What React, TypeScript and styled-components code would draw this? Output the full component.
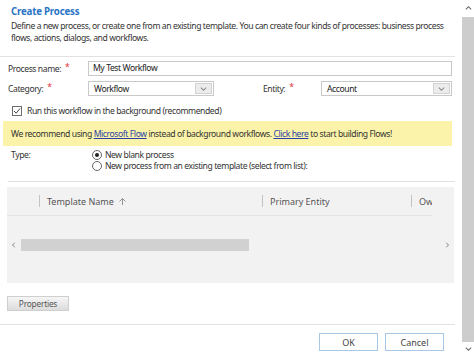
import React from 'react';
import styled, { createGlobalStyle } from 'styled-components';

const Global = createGlobalStyle`
  html, body { margin: 0; padding: 0; background: #fff; }
  body { font-family: "Noto Sans", "Open Sans", sans-serif; color: #333; letter-spacing: -0.42px; }
  * { box-sizing: border-box; }
`;

const Frame = styled.div`
  width: 474px;
  height: 354px;
  display: flex;
  overflow: hidden;
  background: #fff;
`;

const Main = styled.div`
  flex: 1;
  min-width: 0;
  display: flex;
  flex-direction: column;
`;

const VScroll = styled.div`
  width: 12px;
  display: flex;
  flex-direction: column;
`;

const ScrollArrow = styled.div<{ $h: number }>`
  height: ${p => p.$h}px;
  display: flex;
  align-items: center;
  justify-content: center;
  color: #666;
`;

const VThumb = styled.div`
  flex: 1;
  background: #cdcdcd;
`;

const Header = styled.div`
  height: 56px;
  padding: 4px 8px 0 11px;
`;

const Title = styled.div`
  font-size: 9.7px;
  font-weight: 700;
  line-height: 16px;
  letter-spacing: -0.2px;
  color: #2a74c5;
`;

const Desc = styled.div`
  font-size: 8.6px;
  line-height: 12px;
  color: #333;
`;

const Divider = styled.div<{ $l?: number; $r?: number; $t?: number }>`
  height: 1px;
  background: #e2e2e2;
  margin: ${p => p.$t ?? 0}px ${p => p.$r ?? 7}px 0 ${p => p.$l ?? 0}px;
`;

const Row = styled.div<{ $t: number; $h: number }>`
  display: flex;
  align-items: center;
  height: ${p => p.$h}px;
  margin-top: ${p => p.$t}px;
  padding: 0 10px 0 8px;
`;

const Label = styled.div<{ $w: number }>`
  width: ${p => p.$w}px;
  flex: none;
  font-size: 8.6px;
  color: #333;
  white-space: nowrap;
`;

const Star = styled.span`
  color: #e0303a;
  margin-left: 4px;
  position: relative;
  top: -2px;
`;

const TextInput = styled.div`
  flex: 1;
  height: 15px;
  border: 1px solid #c9c9c9;
  font-size: 8.6px;
  line-height: 13px;
  padding-left: 4px;
  color: #222;
`;

const Select = styled.div<{ $w: number }>`
  width: ${p => p.$w}px;
  flex: none;
  height: 15px;
  border: 1px solid #c9c9c9;
  display: flex;
  align-items: center;
  justify-content: space-between;
  padding: 1px;
  font-size: 8.6px;
  color: #222;
`;

const SelectText = styled.span`
  padding-left: 4px;
`;

const SelectBtn = styled.div`
  width: 17px;
  height: 11px;
  background: #ececec;
  border: 1px solid #d2d2d2;
  display: flex;
  align-items: center;
  justify-content: center;
`;

const Gap = styled.div<{ $w: number }>`
  width: ${p => p.$w}px;
  flex: none;
`;

const CheckRow = styled.div`
  display: flex;
  align-items: center;
  height: 11px;
  margin-top: 9px;
  padding-left: 12px;
  font-size: 8.6px;
  color: #333;
  gap: 5px;
`;

const CheckBox = styled.div`
  width: 10px;
  height: 10px;
  border: 1px solid #6d6d6d;
  display: flex;
  align-items: center;
  justify-content: center;
  background: #fff;
`;

const Banner = styled.div`
  margin: 5px 10px 0 3px;
  height: 25px;
  background: #fbf3a9;
  display: flex;
  align-items: center;
  padding-left: 8px;
  font-size: 8.6px;
  color: #333;
  white-space: nowrap;
`;

const Link = styled.a`
  color: #2b3fa8;
  text-decoration: underline;
`;

const TypeBlock = styled.div`
  display: flex;
  margin-top: 3px;
  padding-left: 11px;
`;

const TypeLabel = styled.div`
  width: 81px;
  flex: none;
  height: 11px;
  display: flex;
  align-items: center;
  font-size: 8.6px;
  color: #333;
`;

const RadioList = styled.div`
  display: flex;
  flex-direction: column;
`;

const RadioRow = styled.div`
  height: 11px;
  display: flex;
  align-items: center;
  gap: 3px;
  font-size: 8.6px;
  color: #333;
  white-space: nowrap;
`;

const Radio = styled.div<{ $on?: boolean }>`
  width: 10px;
  height: 10px;
  border-radius: 50%;
  border: 1px solid #666;
  display: flex;
  align-items: center;
  justify-content: center;
  &::after {
    content: '';
    width: 4px;
    height: 4px;
    border-radius: 50%;
    background: #222;
    display: ${p => (p.$on ? 'block' : 'none')};
  }
`;

const Grid = styled.div`
  margin: 5px 8px 0 7px;
  height: 96px;
  background: #f3f2f3;
  display: flex;
  flex-direction: column;
`;

const GridHeader = styled.div`
  height: 29px;
  border-bottom: 1px solid #e6e5e6;
  display: flex;
  align-items: center;
  width: 425px;
  overflow: hidden;
  flex: none;
`;

const Col = styled.div<{ $w: number }>`
  width: ${p => p.$w}px;
  flex: none;
  display: flex;
  align-items: center;
  height: 12px;
  font-size: 9px;
  letter-spacing: 0;
  color: #555;
  white-space: nowrap;
`;

const ColSep = styled.div`
  width: 1px;
  height: 12px;
  background: #c3c3c3;
  margin-right: 7px;
  flex: none;
`;

const HScroll = styled.div`
  margin-top: 23px;
  height: 12px;
  display: flex;
  align-items: center;
`;

const HArrow = styled.div`
  width: 14px;
  flex: none;
  display: flex;
  align-items: center;
  justify-content: center;
  color: #777;
`;

const HTrack = styled.div`
  flex: 1;
  height: 12px;
  display: flex;
`;

const HThumb = styled.div`
  width: 228px;
  background: #d2d1d2;
`;

const PropButton = styled.div`
  margin: 13px 0 0 7px;
  width: 62px;
  height: 15px;
  border: 1px solid #cfcfcf;
  background: linear-gradient(#f6f6f6, #dcdcdc);
  display: flex;
  align-items: center;
  justify-content: center;
  font-size: 8.3px;
  letter-spacing: -0.2px;
  color: #555;
`;

const Footer = styled.div`
  display: flex;
  justify-content: flex-end;
  gap: 7px;
  margin-top: 8px;
  padding-right: 18px;
`;

const DlgButton = styled.div`
  width: 59px;
  height: 18px;
  border: 1px solid #a9c8e6;
  background: #fff;
  display: flex;
  align-items: center;
  justify-content: center;
  font-size: 9px;
  letter-spacing: 0;
  color: #444;
`;

const Chevron = ({ dir, size = 7, color = '#777' }: { dir: 'up' | 'down' | 'left' | 'right'; size?: number; color?: string }) => {
  const d = {
    up: 'M1 5 L4 2 L7 5',
    down: 'M1 3 L4 6 L7 3',
    left: 'M5 1 L2 4 L5 7',
    right: 'M3 1 L6 4 L3 7',
  }[dir];
  return (
    <svg width={size} height={size} viewBox="0 0 8 8">
      <path d={d} fill="none" stroke={color} strokeWidth="1.2" />
    </svg>
  );
};

export default function App() {
  return (
    <>
      <Global />
      <Frame>
        <Main>
          <Header>
            <Title>Create Process</Title>
            <Desc>
              Define a new process, or create one from an existing template. You can create four kinds of processes: business process flows, actions, dialogs, and workflows.
            </Desc>
          </Header>
          <Divider />
          <Row $t={4} $h={15}>
            <Label $w={80}>Process name:<Star>*</Star></Label>
            <TextInput>My Test Workflow</TextInput>
          </Row>
          <Row $t={5} $h={15}>
            <Label $w={80}>Category:<Star>*</Star></Label>
            <Select $w={126}>
              <SelectText>Workflow</SelectText>
              <SelectBtn><Chevron dir="down" size={7} color="#888" /></SelectBtn>
            </Select>
            <Gap $w={49} />
            <Label $w={58}>Entity:<Star>*</Star></Label>
            <Select $w={131}>
              <SelectText>Account</SelectText>
              <SelectBtn><Chevron dir="down" size={7} color="#888" /></SelectBtn>
            </Select>
          </Row>
          <CheckRow>
            <CheckBox>
              <svg width="8" height="8" viewBox="0 0 8 8">
                <path d="M1 4 L3.2 6.2 L7 1.5" fill="none" stroke="#444" strokeWidth="1" />
              </svg>
            </CheckBox>
            Run this workflow in the background (recommended)
          </CheckRow>
          <Banner>
            We recommend using&nbsp;<Link>Microsoft Flow</Link>&nbsp;instead of background workflows.&nbsp;<Link>Click here</Link>&nbsp;to start building Flows!
          </Banner>
          <TypeBlock>
            <TypeLabel>Type:</TypeLabel>
            <RadioList>
              <RadioRow><Radio $on />New blank process</RadioRow>
              <RadioRow><Radio />New process from an existing template (select from list):</RadioRow>
            </RadioList>
          </TypeBlock>
          <Divider $t={10} $l={8} />
          <Grid>
            <GridHeader>
              <Col $w={32} />
              <Col $w={223}>
                <ColSep />
                Template Name
                <svg width="9" height="9" viewBox="0 0 9 9" style={{ marginLeft: 4 }}>
                  <path d="M4.5 8 V1.5 M1.5 4.5 L4.5 1.5 L7.5 4.5" fill="none" stroke="#888" strokeWidth="0.9" />
                </svg>
              </Col>
              <Col $w={149}>
                <ColSep />
                Primary Entity
              </Col>
              <Col $w={21}>
                <ColSep />
                Ow
              </Col>
            </GridHeader>
            <HScroll>
              <HArrow><Chevron dir="left" size={6} color="#777" /></HArrow>
              <HTrack><HThumb /></HTrack>
              <HArrow><Chevron dir="right" size={6} color="#777" /></HArrow>
            </HScroll>
          </Grid>
          <PropButton>Properties</PropButton>
          <Divider $t={13} />
          <Footer>
            <DlgButton>OK</DlgButton>
            <DlgButton>Cancel</DlgButton>
          </Footer>
        </Main>
        <VScroll>
          <ScrollArrow $h={17}><Chevron dir="up" size={7} color="#666" /></ScrollArrow>
          <VThumb />
          <ScrollArrow $h={12}><Chevron dir="down" size={7} color="#666" /></ScrollArrow>
        </VScroll>
      </Frame>
    </>
  );
}
